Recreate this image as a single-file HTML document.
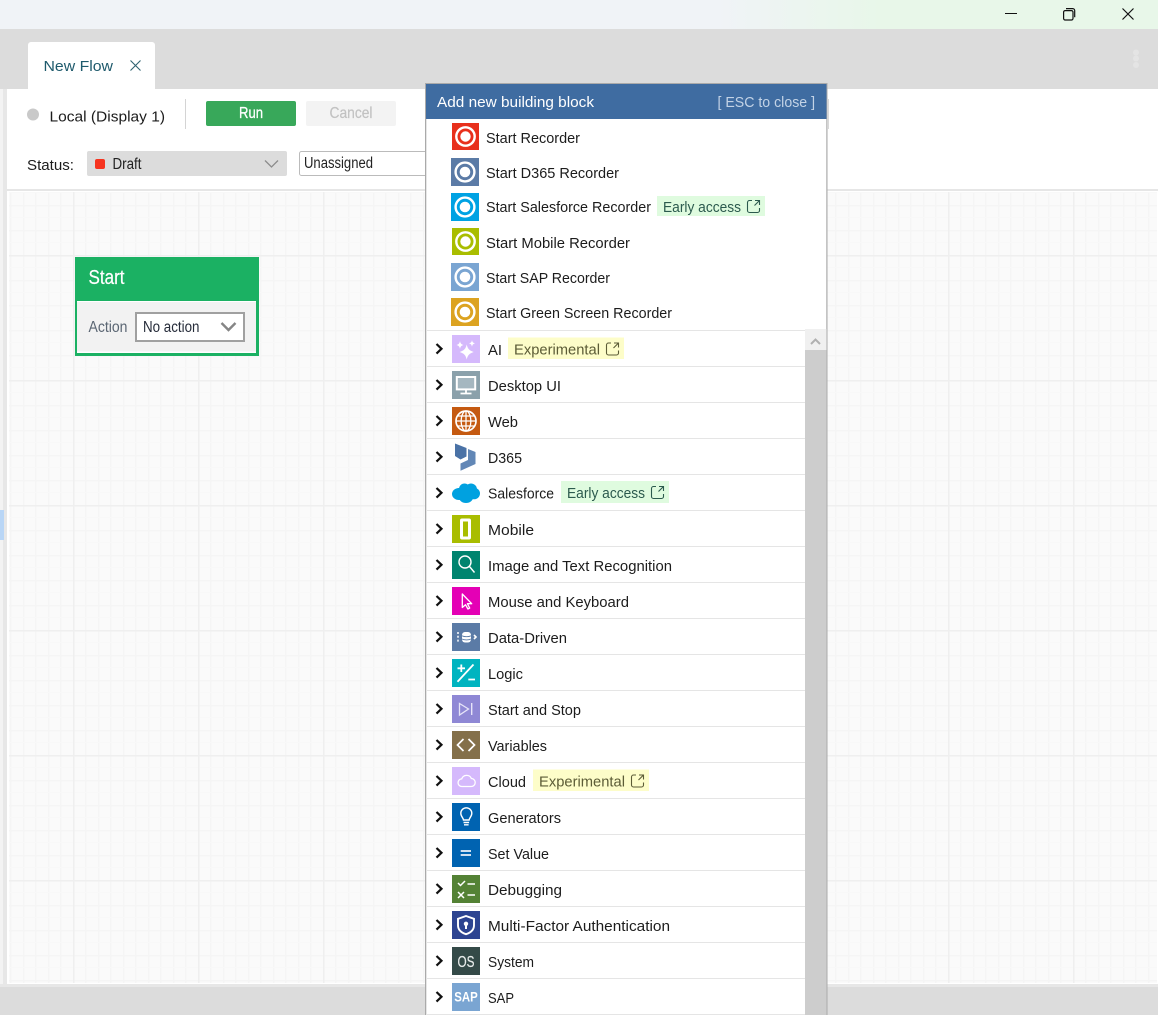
<!DOCTYPE html>
<html lang="en">
<head>
<meta charset="utf-8">
<title>New Flow</title>
<style>
html,body{margin:0;padding:0;width:1158px;height:1015px;overflow:hidden;background:#dcdcdc}
svg{display:block}
text{font-family:"Liberation Sans",sans-serif;font-size:15px;fill:#1c1c1c}
.g{fill:#2c5a4e}
.y{fill:#5c5c36}
.ch{fill:none;stroke:#111;stroke-width:2.2}
.w{fill:none;stroke:#fff;stroke-width:1.4}
.sep{fill:#e5e5e5}
.ext{fill:none;stroke-width:1.1}
</style>
</head>
<body>
<svg xmlns="http://www.w3.org/2000/svg" width="1158" height="1015" viewBox="0 0 1158 1015">
<defs>
<linearGradient id="tb" x1="0" x2="1" y1="0" y2="0">
<stop offset="0" stop-color="#f0f3f7"/><stop offset=".62" stop-color="#f0f3f7"/><stop offset=".76" stop-color="#e8f7e9"/><stop offset="1" stop-color="#e8f7e9"/>
</linearGradient>
<pattern id="grid" patternUnits="userSpaceOnUse" width="125" height="125" x="73" y="255">
<rect width="125" height="125" fill="#fafafa"/>
<g fill="#f5f5f5">
<rect x="12" width="1.5" height="125"/><rect x="25" width="1.5" height="125"/><rect x="37" width="1.5" height="125"/><rect x="50" width="1.5" height="125"/><rect x="62" width="1.5" height="125"/><rect x="75" width="1.5" height="125"/><rect x="87" width="1.5" height="125"/><rect x="100" width="1.5" height="125"/><rect x="112" width="1.5" height="125"/>
<rect y="25" width="125" height="1.5"/><rect y="50" width="125" height="1.5"/><rect y="75" width="125" height="1.5"/><rect y="100" width="125" height="1.5"/>
</g>
<g fill="#f8f8f8">
<rect y="12" width="125" height="1"/><rect y="37" width="125" height="1"/><rect y="62" width="125" height="1"/><rect y="87" width="125" height="1"/><rect y="112" width="125" height="1"/>
</g>
<rect x="0" width="1.5" height="125" fill="#efefef"/>
<rect y="0" width="125" height="1.5" fill="#efefef"/>
</pattern>
</defs>

<!-- title bar -->
<rect width="1158" height="29" fill="url(#tb)"/>
<rect x="1005" y="13" width="12" height="1" fill="#111"/>
<g fill="none" stroke="#111" stroke-width="1.2">
<rect x="1063.6" y="10.6" width="9.4" height="9.4" rx="1.5"/>
<path d="M1066 8.6h6.7a2 2 0 0 1 2 2v6.700"/>
<path d="M1122.5 8.5l11 11M1133.500 8.500l-11 11"/>
</g>

<!-- tab strip -->
<rect y="29" width="1158" height="60" fill="#dcdcdc"/>
<path d="M28 89V45a3 3 0 0 1 3-3H152a3 3 0 0 1 3 3V89Z" fill="#fff"/>
<text x="43.5" y="71" textLength="69.5" lengthAdjust="spacingAndGlyphs" style="fill:#1e5a6c">New Flow</text>
<path d="M130.5 60.5l10 10M140.5 60.5l-10 10" stroke="#2f6270" stroke-width="1.1" fill="none"/>
<g fill="#e4e4e4"><circle cx="1136" cy="52.500" r="3"/><circle cx="1136" cy="58.500" r="3"/><circle cx="1136" cy="65" r="3"/></g>

<!-- toolbar -->
<rect x="7" y="89" width="1151" height="100" fill="#fff"/>
<rect x="0" y="89" width="3" height="898" fill="#f3f3f3"/>
<rect x="3" y="89" width="4" height="898" fill="#e7e7e7"/>
<rect x="0" y="510" width="4" height="30" fill="#b9d6f6"/>
<circle cx="33" cy="114.500" r="6" fill="#c9c9c9"/>
<text x="49.500" y="121.500" textLength="115.500" lengthAdjust="spacingAndGlyphs">Local (Display 1)</text>
<rect x="185" y="99" width="1" height="30" fill="#d4d4d4"/>
<rect x="828" y="99" width="1" height="30" fill="#d8d8d8"/>
<rect x="206" y="101" width="90" height="25" rx="2" fill="#38a85a"/>
<text x="239" y="118" textLength="24" lengthAdjust="spacingAndGlyphs" style="fill:#fff;stroke:#fff;stroke-width:.3;font-size:16px">Run</text>
<rect x="306" y="101" width="90" height="25" rx="2" fill="#f3f3f3"/>
<text x="329.500" y="118" textLength="43" lengthAdjust="spacingAndGlyphs" style="fill:#c2c2c2;stroke:#c2c2c2;stroke-width:.2;font-size:16px">Cancel</text>
<text x="27" y="170" textLength="47" lengthAdjust="spacingAndGlyphs">Status:</text>
<rect x="87" y="151" width="200" height="25" rx="2" fill="#dcdcdc"/>
<rect x="95" y="159" width="10" height="10" rx="2" fill="#f6341f"/>
<text x="112.500" y="169" textLength="29" lengthAdjust="spacingAndGlyphs" style="font-size:15.500px;fill:#222">Draft</text>
<path d="M265 160.500l6.500 6.500 6.500-6.500" fill="none" stroke="#8c8c8c" stroke-width="1.300"/>
<rect x="299.500" y="151.500" width="130" height="24" rx="2" fill="#fff" stroke="#bbb"/>
<text x="304" y="168" textLength="69" lengthAdjust="spacingAndGlyphs" style="font-size:15.500px;fill:#222">Unassigned</text>

<!-- canvas -->
<rect x="7" y="189" width="1151" height="2" fill="#e6e6e6"/>
<rect x="7" y="191" width="1151" height="793" fill="#fff"/>
<rect x="9" y="192" width="1148" height="791" fill="url(#grid)"/>
<rect x="0" y="984" width="1158" height="3" fill="#e7e7e7"/>
<rect x="0" y="987" width="1158" height="28" fill="#dcdcdc"/>

<!-- Start node -->
<rect x="75" y="257" width="184" height="99" fill="#1bb163"/>
<rect x="77" y="301" width="179" height="52" fill="#fff"/>
<rect x="77" y="302" width="179" height="49.500" fill="#f2f2f2"/>
<text x="88.500" y="284" textLength="36" lengthAdjust="spacingAndGlyphs" style="fill:#fff;stroke:#fff;stroke-width:.2;font-size:20px">Start</text>
<text x="88.500" y="332" textLength="39" lengthAdjust="spacingAndGlyphs" style="fill:#5b6673;font-size:15.500px">Action</text>
<rect x="136" y="313" width="108" height="28" fill="#fff" stroke="#a0a0a0" stroke-width="2"/>
<text x="143" y="332" textLength="56.500" lengthAdjust="spacingAndGlyphs" style="fill:#262c3a;font-size:15.500px">No action</text>
<path d="M221.500 323l7 7 7-7" fill="none" stroke="#858585" stroke-width="2.400"/>

<!-- popup -->
<rect x="425" y="83" width="402.500" height="932" fill="#aaa"/>
<rect x="426.300" y="84" width="400" height="931" fill="#fff"/>
<rect x="426" y="84" width="400.500" height="35" fill="#3f6ca1"/>
<text x="437" y="107" textLength="157" lengthAdjust="spacingAndGlyphs" style="fill:#fff">Add new building block</text>
<text x="717.500" y="107" textLength="97.500" lengthAdjust="spacingAndGlyphs" style="fill:#c3d3e6">[ ESC to close ]</text>

<!-- recorder rows -->
<rect x="452" y="123" width="27" height="27" fill="#e8301c"/>
<circle cx="465.500" cy="136.500" r="9.200" fill="none" stroke="#fff" stroke-width="2.400"/><circle cx="465.500" cy="136.500" r="5.200" fill="#fff"/>
<text x="486" y="143" textLength="94" lengthAdjust="spacingAndGlyphs">Start Recorder</text>

<rect x="451" y="158" width="28" height="28" fill="#5b7ba6"/>
<circle cx="465" cy="172" r="9.400" fill="none" stroke="#fff" stroke-width="2.400"/><circle cx="465" cy="172" r="5.300" fill="#fff"/>
<text x="486" y="178" textLength="133" lengthAdjust="spacingAndGlyphs">Start D365 Recorder</text>

<rect x="451" y="193" width="28" height="28" fill="#00a2e3"/>
<circle cx="465" cy="207" r="9.400" fill="none" stroke="#fff" stroke-width="2.400"/><circle cx="465" cy="207" r="5.300" fill="#fff"/>
<text x="486" y="212" textLength="165" lengthAdjust="spacingAndGlyphs">Start Salesforce Recorder</text>
<rect x="657" y="196" width="108" height="20" fill="#dffbdf"/>
<text x="663" y="212" textLength="78" lengthAdjust="spacingAndGlyphs" class="g">Early access</text>
<g class="ext" stroke="#2c5a4e"><path d="M752 200.500h-2.500a2 2 0 0 0-2 2v8a2 2 0 0 0 2 2h8a2 2 0 0 0 2-2v-2.500"/><path d="M755 200.500h4.500v4.500M759.500 200.500l-5 5"/></g>

<rect x="452" y="228" width="27" height="27" fill="#a9bd00"/>
<circle cx="465.500" cy="241.500" r="9.200" fill="none" stroke="#fff" stroke-width="2.400"/><circle cx="465.500" cy="241.500" r="5.200" fill="#fff"/>
<text x="486" y="248" textLength="144" lengthAdjust="spacingAndGlyphs">Start Mobile Recorder</text>

<rect x="451" y="263" width="28" height="28" fill="#7aa5d2"/>
<circle cx="465" cy="277" r="9.400" fill="none" stroke="#fff" stroke-width="2.400"/><circle cx="465" cy="277" r="5.300" fill="#fff"/>
<text x="486" y="283" textLength="124" lengthAdjust="spacingAndGlyphs">Start SAP Recorder</text>

<rect x="451" y="298" width="28" height="28" fill="#dca321"/>
<circle cx="465" cy="312" r="9.400" fill="none" stroke="#fff" stroke-width="2.400"/><circle cx="465" cy="312" r="5.300" fill="#fff"/>
<text x="486" y="318" textLength="186" lengthAdjust="spacingAndGlyphs">Start Green Screen Recorder</text>

<!-- separators -->
<g class="sep">
<rect x="427" y="330" width="378" height="1"/><rect x="427" y="366" width="378" height="1"/><rect x="427" y="402" width="378" height="1"/><rect x="427" y="438" width="378" height="1"/><rect x="427" y="474" width="378" height="1"/><rect x="427" y="510" width="378" height="1"/><rect x="427" y="546" width="378" height="1"/><rect x="427" y="582" width="378" height="1"/><rect x="427" y="618" width="378" height="1"/><rect x="427" y="654" width="378" height="1"/><rect x="427" y="690" width="378" height="1"/><rect x="427" y="726" width="378" height="1"/><rect x="427" y="762" width="378" height="1"/><rect x="427" y="798" width="378" height="1"/><rect x="427" y="834" width="378" height="1"/><rect x="427" y="870" width="378" height="1"/><rect x="427" y="906" width="378" height="1"/><rect x="427" y="942" width="378" height="1"/><rect x="427" y="978" width="378" height="1"/><rect x="427" y="1014" width="378" height="1"/>
</g>

<!-- scrollbar -->
<rect x="805" y="329" width="21.500" height="21" fill="#f0f0f0"/>
<rect x="805" y="350" width="21.500" height="665" fill="#cdcdcd"/>
<path d="M811 344l4.500-4.500 4.500 4.500" fill="none" stroke="#b0b0b0" stroke-width="2"/>

<!-- chevrons -->
<g class="ch">
<path d="M436.500 344l5 4.800-5 4.800"/><path d="M436.500 380l5 4.800-5 4.800"/><path d="M436.500 416l5 4.800-5 4.800"/><path d="M436.500 452l5 4.800-5 4.800"/><path d="M436.500 488l5 4.800-5 4.800"/><path d="M436.500 524l5 4.800-5 4.800"/><path d="M436.500 560l5 4.800-5 4.800"/><path d="M436.500 596l5 4.800-5 4.800"/><path d="M436.500 632l5 4.800-5 4.800"/><path d="M436.500 668l5 4.800-5 4.800"/><path d="M436.500 704l5 4.800-5 4.800"/><path d="M436.500 740l5 4.800-5 4.800"/><path d="M436.500 776l5 4.800-5 4.800"/><path d="M436.500 812l5 4.800-5 4.800"/><path d="M436.500 848l5 4.800-5 4.800"/><path d="M436.500 884l5 4.800-5 4.800"/><path d="M436.500 920l5 4.800-5 4.800"/><path d="M436.500 956l5 4.800-5 4.800"/><path d="M436.500 992l5 4.800-5 4.800"/>
</g>

<!-- AI -->
<g transform="translate(452 335)">
<rect width="28" height="28" fill="#d5b9fc"/>
<path fill="#fff" d="M14.700 9.500c1 4.200 2.500 6 7 7.500-4.500 1.500-6 3.300-7 7.500-1-4.200-2.500-6-7-7.500 4.500-1.500 6-3.300 7-7.500Z"/>
<path fill="#fff" d="M8 6c.5 2.500 1.200 3.300 3.500 4-2.300.7-3 1.500-3.500 4-.5-2.500-1.200-3.300-3.500-4 2.300-.7 3-1.500 3.500-4Z"/>
<path fill="#fff" d="M20 5c.4 2.100 1 2.800 3 3.400-2 .6-2.600 1.300-3 3.400-.4-2.100-1-2.800-3-3.400 2-.6 2.600-1.300 3-3.400Z"/>
</g>
<text x="488" y="355" textLength="14" lengthAdjust="spacingAndGlyphs">AI</text>
<rect x="508" y="337.500" width="116" height="21.500" fill="#fdfdc9"/>
<text x="514" y="354.500" textLength="86" lengthAdjust="spacingAndGlyphs" class="y">Experimental</text>
<g class="ext" stroke="#5c5c36"><path d="M611 343h-2.500a2 2 0 0 0-2 2v8a2 2 0 0 0 2 2h8a2 2 0 0 0 2-2v-2.500"/><path d="M614 343h4.500v4.500M618.500 343l-5 5"/></g>

<!-- Desktop UI -->
<g transform="translate(452 371)">
<rect width="28" height="28" fill="#8ba1ab"/>
<rect x="4.800" y="6" width="18.400" height="12.400" fill="#a5b7c0" stroke="#fff" stroke-width="2"/>
<path d="M14 19v3M8.500 22.500h11" stroke="#fff" stroke-width="1.800" fill="none"/>
</g>
<text x="488" y="391" textLength="73" lengthAdjust="spacingAndGlyphs">Desktop UI</text>

<!-- Web -->
<g transform="translate(452 407)">
<rect width="28" height="28" fill="#c55a11"/>
<g fill="none" stroke="#fff" stroke-width="1.300">
<circle cx="14" cy="14" r="10" stroke-width="1.700"/>
<ellipse cx="14" cy="14" rx="4.800" ry="10"/>
<path d="M14 4v20M4 14h20M5.300 9h17.400M5.300 19h17.400"/>
</g>
</g>
<text x="488" y="427" textLength="30" lengthAdjust="spacingAndGlyphs">Web</text>

<!-- D365 -->
<g transform="translate(452 443)">
<path fill="#4a72a6" d="M3 .5L14.500 5V13.500L8.500 16.500 3 13Z"/>
<path fill="#6287b6" d="M16 6L23.500 9V21L8.500 27.700V20.500L16 17Z"/>
</g>
<text x="488" y="463" textLength="34" lengthAdjust="spacingAndGlyphs">D365</text>

<!-- Salesforce -->
<g transform="translate(452 479)" fill="#00a1e0">
<ellipse cx="7" cy="15" rx="7" ry="6"/>
<ellipse cx="12.500" cy="10" rx="5.500" ry="5.500"/>
<ellipse cx="19" cy="10.500" rx="6" ry="6"/>
<ellipse cx="22" cy="14.500" rx="6" ry="5.800"/>
<ellipse cx="14" cy="18.500" rx="7" ry="5.500"/>
<rect x="6" y="9" width="15" height="11"/>
</g>
<text x="488" y="498.500" textLength="66" lengthAdjust="spacingAndGlyphs">Salesforce</text>
<rect x="561" y="481" width="108" height="22" fill="#dffbdf"/>
<text x="567" y="498" textLength="78" lengthAdjust="spacingAndGlyphs" class="g">Early access</text>
<g class="ext" stroke="#2c5a4e"><path d="M656 486.500h-2.500a2 2 0 0 0-2 2v8a2 2 0 0 0 2 2h8a2 2 0 0 0 2-2v-2.500"/><path d="M659 486.500h4.500v4.500M663.500 486.500l-5 5"/></g>

<!-- Mobile -->
<g transform="translate(452 515)">
<rect width="28" height="28" fill="#a9bd00"/>
<rect x="9.500" y="5" width="8" height="18" rx=".5" fill="none" stroke="#fff" stroke-width="3"/>
</g>
<text x="488" y="535" textLength="46" lengthAdjust="spacingAndGlyphs">Mobile</text>

<!-- Image -->
<g transform="translate(452 551)">
<rect width="28" height="28" fill="#00846f"/>
<circle cx="13" cy="11" r="6" class="w"/>
<path d="M17.500 15.500l5 6" class="w"/>
</g>
<text x="488" y="571" textLength="184" lengthAdjust="spacingAndGlyphs">Image and Text Recognition</text>

<!-- Mouse -->
<g transform="translate(452 587)">
<rect width="28" height="28" fill="#e400b5"/>
<path d="M10.300 7v13.500l3.200-2.800 2.400 4.300 1.800-1-2.300-4.300h4.300Z" fill="none" stroke="#fff" stroke-width="1.300" stroke-linejoin="round"/>
</g>
<text x="488" y="607" textLength="141" lengthAdjust="spacingAndGlyphs">Mouse and Keyboard</text>

<!-- Data -->
<g transform="translate(452 623)">
<rect width="28" height="28" fill="#5b7ba6"/>
<path d="M6 9v11" stroke="#fff" stroke-width="1.500" stroke-dasharray="2 1.800" fill="none"/>
<rect x="10" y="9" width="9" height="10.500" rx="3" fill="#fff"/>
<path d="M10 12.800c2.500 1.200 6.500 1.200 9 0M10 16c2.500 1.200 6.500 1.200 9 0" stroke="#5b7ba6" stroke-width=".9" fill="none"/>
<path d="M22 12l2 2-2 2" stroke="#fff" stroke-width="1.600" fill="none"/>
</g>
<text x="488" y="643" textLength="79" lengthAdjust="spacingAndGlyphs">Data-Driven</text>

<!-- Logic -->
<g transform="translate(452 659)">
<rect width="28" height="28" fill="#00b4c0"/>
<path d="M5.500 9.300h7.500M9.300 5.500v7.500M21.500 5.500L5.500 22.700M16.300 20.500h6.700" stroke="#fff" stroke-width="1.800" fill="none"/>
</g>
<text x="488" y="679" textLength="35" lengthAdjust="spacingAndGlyphs">Logic</text>

<!-- Start/Stop -->
<g transform="translate(452 695)">
<rect width="28" height="28" fill="#8f88d5"/>
<path d="M7.500 8.500v11.500L16.500 14Z" fill="none" stroke="#e6e4f8" stroke-width="1.300"/>
<path d="M19.700 8v12" stroke="#e6e4f8" stroke-width="1.400"/>
</g>
<text x="488" y="715" textLength="93" lengthAdjust="spacingAndGlyphs">Start and Stop</text>

<!-- Variables -->
<g transform="translate(452 731)">
<rect width="28" height="28" fill="#84704a"/>
<path d="M11.500 8L5.500 14l6 6M16.500 8l6 6-6 6" stroke="#fff" stroke-width="1.700" fill="none"/>
</g>
<text x="488" y="751" textLength="59" lengthAdjust="spacingAndGlyphs">Variables</text>

<!-- Cloud -->
<g transform="translate(452 767)">
<rect width="28" height="28" fill="#d5b9fc"/>
<path d="M10 19.500a3.800 3.800 0 0 1-.3-7.600 5.200 5.200 0 0 1 9.700-.4 4 4 0 0 1-.4 8Z" fill="none" stroke="#fff" stroke-width="1.300"/>
</g>
<text x="488" y="787" textLength="38" lengthAdjust="spacingAndGlyphs">Cloud</text>
<rect x="533" y="769.500" width="116" height="21.500" fill="#fdfdc9"/>
<text x="539" y="786.500" textLength="86" lengthAdjust="spacingAndGlyphs" class="y">Experimental</text>
<g class="ext" stroke="#5c5c36"><path d="M636 775h-2.500a2 2 0 0 0-2 2v8a2 2 0 0 0 2 2h8a2 2 0 0 0 2-2v-2.500"/><path d="M639 775h4.500v4.500M643.500 775l-5 5"/></g>

<!-- Generators -->
<g transform="translate(452 803)">
<rect width="28" height="28" fill="#0063b1"/>
<path d="M11.500 17c0-2-2.700-3.300-2.700-6.700a5.500 5.500 0 0 1 11 0c0 3.400-2.700 4.700-2.700 6.700Z" fill="none" stroke="#fff" stroke-width="1.400"/>
<path d="M11.500 19.500h5.600M12 21.800h4.600" stroke="#fff" stroke-width="1.400"/>
</g>
<text x="488" y="823" textLength="73" lengthAdjust="spacingAndGlyphs">Generators</text>

<!-- Set Value -->
<g transform="translate(452 839)">
<rect width="28" height="28" fill="#0063b1"/>
<path d="M8.700 12h10.300M8.700 16h10.300" stroke="#cfe0f0" stroke-width="2"/>
</g>
<text x="488" y="859" textLength="61" lengthAdjust="spacingAndGlyphs">Set Value</text>

<!-- Debugging -->
<g transform="translate(452 875)">
<rect width="28" height="28" fill="#548235"/>
<path d="M6 8l2.500 2.500L13 6M6 17l6 6M12 17l-6 6" stroke="#fff" stroke-width="1.500" fill="none"/>
<path d="M15.500 9h7.500M15.500 20h7.500" stroke="#fff" stroke-width="1.600"/>
</g>
<text x="488" y="895" textLength="74" lengthAdjust="spacingAndGlyphs">Debugging</text>

<!-- MFA -->
<g transform="translate(452 911)">
<rect width="28" height="28" fill="#2d4491"/>
<path d="M14 5l8 2.800v6.400c0 4.500-3.500 7.500-8 9-4.500-1.500-8-4.500-8-9V7.800Z" fill="none" stroke="#fff" stroke-width="1.900"/>
<circle cx="14" cy="12.800" r="2.200" fill="#fff"/><rect x="13" y="13.500" width="2" height="4.500" fill="#fff"/>
</g>
<text x="488" y="931" textLength="182" lengthAdjust="spacingAndGlyphs">Multi-Factor Authentication</text>

<!-- System -->
<g transform="translate(452 947)">
<rect width="28" height="28" fill="#344a48"/>
<text x="5.500" y="20" textLength="17" lengthAdjust="spacingAndGlyphs" style="fill:#e8eceb;stroke:#e8eceb;stroke-width:.2;font-size:15.500px">OS</text>
</g>
<text x="488" y="967" textLength="46" lengthAdjust="spacingAndGlyphs">System</text>

<!-- SAP -->
<g transform="translate(452 983)">
<rect width="28" height="28" fill="#7aa5d2"/>
<text x="2.300" y="18.700" textLength="23.500" lengthAdjust="spacingAndGlyphs" style="fill:#fff;font-size:14px;font-weight:bold">SAP</text>
</g>
<text x="488" y="1003" textLength="26" lengthAdjust="spacingAndGlyphs">SAP</text>
</svg>
</body>
</html>
